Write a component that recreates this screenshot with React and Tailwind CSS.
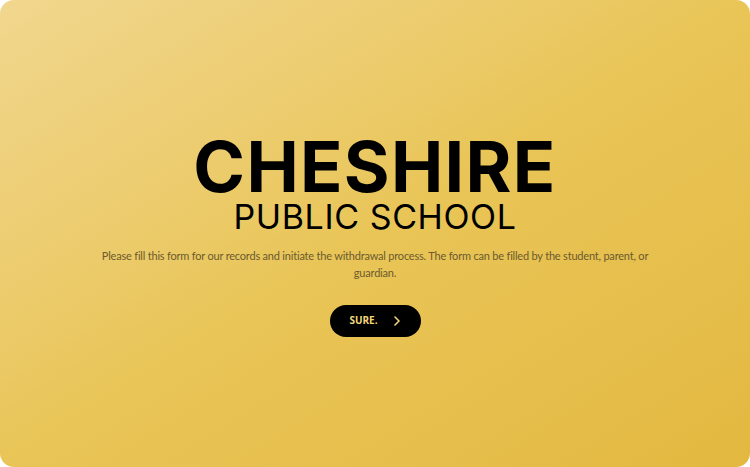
export default function App() {
    return (
        <div className="w-[750px] h-[467px] bg-white">
            <div className="w-full h-full rounded-[14px] overflow-hidden bg-gradient-to-br from-[#f1d78e] via-[#e9c557] to-[#e3b840] flex flex-col items-center justify-center">
                <div className="flex flex-col items-center mt-[4px]">
                    <h1 className="font-['Inter',sans-serif] font-bold text-[70px] leading-[64px] tracking-[1.3px] text-black">CHESHIRE</h1>
                    <h2 className="font-['Inter',sans-serif] font-normal text-[34px] leading-[36px] tracking-[0.6px] text-black">PUBLIC SCHOOL</h2>
                    <p className="font-['Lato',sans-serif] text-[11px] leading-[17px] tracking-[-0.2px] text-[#6b5a2e] text-center w-[550px] mt-[12px]">
                        Please fill this form for our records and initiate the withdrawal process. The form can be filled by the student, parent, or guardian.
                    </p>
                    <button className="mt-[24px] w-[91px] h-[32px] rounded-full bg-black flex items-center justify-center gap-[15px] font-['Open_Sans',sans-serif] font-bold text-[10px] text-[#f3d67c]">
                        <span>SURE.</span>
                        <svg width="8" height="10" viewBox="0 0 8 10" fill="none" stroke="#f3d67c" strokeWidth="1.6" strokeLinecap="round" strokeLinejoin="round">
                            <path d="M2 1l4 4-4 4" />
                        </svg>
                    </button>
                </div>
            </div>
        </div>
    );
}
